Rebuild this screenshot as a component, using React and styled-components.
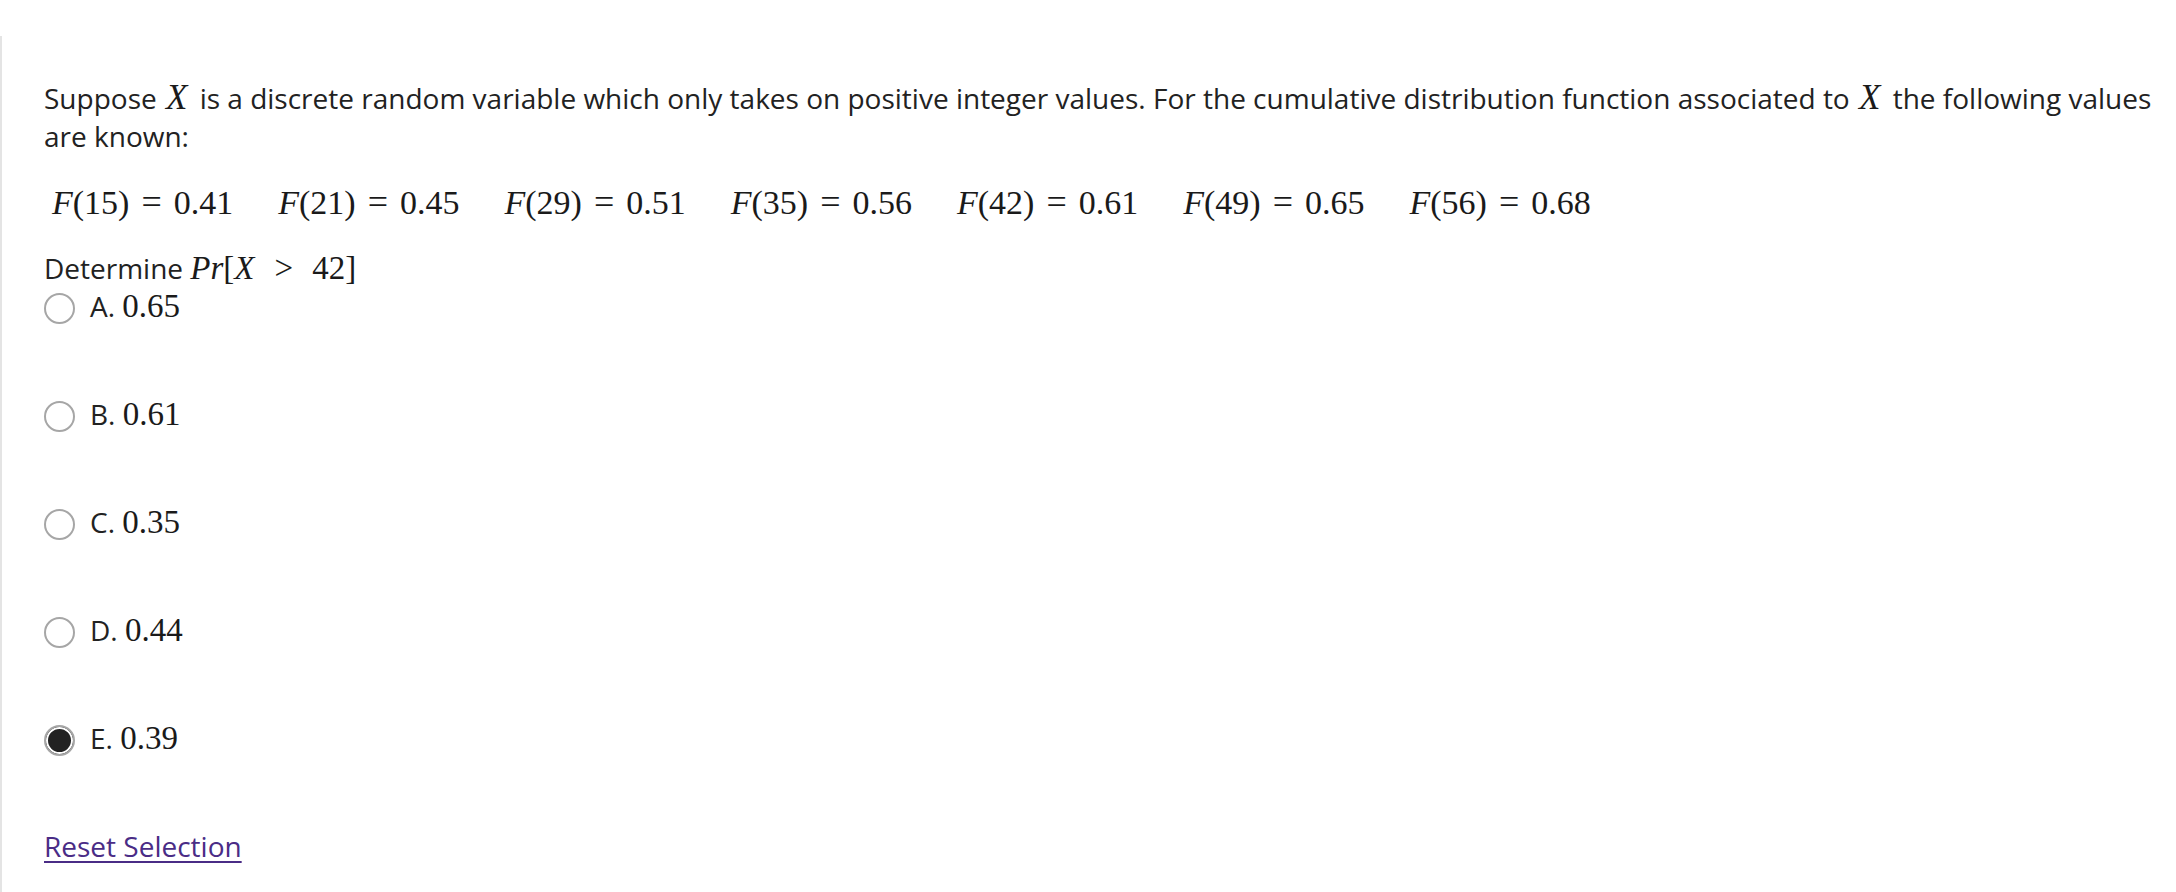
import React, { useState } from 'react';
import styled, { createGlobalStyle } from 'styled-components';

const GlobalStyle = createGlobalStyle`
  html, body {
    margin: 0;
    padding: 0;
    background: #ffffff;
  }
  body {
    font-family: 'Open Sans', 'Noto Sans', sans-serif;
    color: #222222;
  }
`;

const VALUES = [
  { x: 15, p: '0.41' },
  { x: 21, p: '0.45' },
  { x: 29, p: '0.51' },
  { x: 35, p: '0.56' },
  { x: 42, p: '0.61' },
  { x: 49, p: '0.65' },
  { x: 56, p: '0.68' },
];

const CHOICES = [
  { key: 'A', value: '0.65' },
  { key: 'B', value: '0.61' },
  { key: 'C', value: '0.35' },
  { key: 'D', value: '0.44' },
  { key: 'E', value: '0.39' },
];

const App = () => {
  const [selected, setSelected] = useState('E');

  return (
    <>
      <GlobalStyle />
      <QuestionPanel>
        <Prompt>
          Suppose <MathVar>X</MathVar> is a discrete random variable which only takes on positive integer
          values. For the cumulative distribution function associated to <MathVar>X</MathVar> the following
          values are known:
        </Prompt>

        <ValueRow>
          {VALUES.map((item) => (
            <MathItem key={item.x}>
              <Italic>F</Italic>({item.x})<Equals>=</Equals>
              {item.p}
            </MathItem>
          ))}
        </ValueRow>

        <Question>
          Determine{' '}
          <Math>
            <Italic>Pr</Italic>[<Italic>X</Italic>
            <Relation>&gt;</Relation>42]
          </Math>
        </Question>

        <ChoiceList>
          {CHOICES.map((choice) => (
            <ChoiceRow key={choice.key} onClick={() => setSelected(choice.key)}>
              <Radio $checked={selected === choice.key} />
              <ChoiceLabel>
                {choice.key}. <Math>{choice.value}</Math>
              </ChoiceLabel>
            </ChoiceRow>
          ))}
        </ChoiceList>

        <ResetLink href="#" onClick={(e) => { e.preventDefault(); setSelected(null); }}>
          Reset Selection
        </ResetLink>
      </QuestionPanel>
    </>
  );
};

export default App;

const QuestionPanel = styled.div`
  margin-top: 36px;
  border-left: 2px solid #e4e4e4;
  padding: 43px 20px 40px 42px;
  min-height: 780px;
  box-sizing: border-box;
`;

const Prompt = styled.p`
  margin: 0;
  font-size: 28px;
  line-height: 38px;
  max-width: 2116px;
`;

const Math = styled.span`
  font-family: 'Liberation Serif', 'Times New Roman', serif;
  font-size: 33px;
  color: #1a1a1a;
`;

const Italic = styled.i`
  font-style: italic;
`;

const MathVar = styled(Math).attrs({ as: 'i' })`
  display: inline-block;
  font-style: italic;
  font-size: 35px;
  line-height: 38px;
  padding: 0 5px 0 2px;
`;

const ValueRow = styled.div`
  display: flex;
  gap: 45px;
  margin-top: 27px;
  padding-left: 8px;
  font-family: 'Liberation Serif', 'Times New Roman', serif;
  font-size: 34px;
  line-height: 40px;
  color: #1a1a1a;
  white-space: nowrap;
`;

const MathItem = styled.span`
  display: inline-flex;
  align-items: baseline;
`;

const Equals = styled.span`
  margin: 0 12px 0 12px;
  font-size: 36px;
`;

const Relation = styled.span`
  margin: 0 19px 0 20px;
`;

const Question = styled.div`
  margin-top: 26px;
  font-size: 28px;
  line-height: 38px;
`;

const ChoiceList = styled.div`
  display: flex;
  flex-direction: column;
  gap: 70px;
`;

const ChoiceRow = styled.label`
  display: flex;
  align-items: center;
  gap: 15px;
  height: 38px;
  cursor: pointer;
`;

const Radio = styled.span`
  width: 31px;
  height: 31px;
  box-sizing: border-box;
  border-radius: 50%;
  border: 2px solid #a6a6a6;
  background: ${({ $checked }) => ($checked ? '#222222' : '#ffffff')};
  box-shadow: ${({ $checked }) => ($checked ? 'inset 0 0 0 2px #ffffff' : 'none')};
  margin-top: 4px;
  flex-shrink: 0;
`;

const ChoiceLabel = styled.span`
  font-size: 28px;
  line-height: 38px;
`;

const ResetLink = styled.a`
  display: inline-block;
  margin-top: 70px;
  font-size: 28px;
  line-height: 38px;
  color: #4a2c86;
  text-decoration: underline;
  text-decoration-thickness: 2px;
  text-underline-offset: 4px;
`;
